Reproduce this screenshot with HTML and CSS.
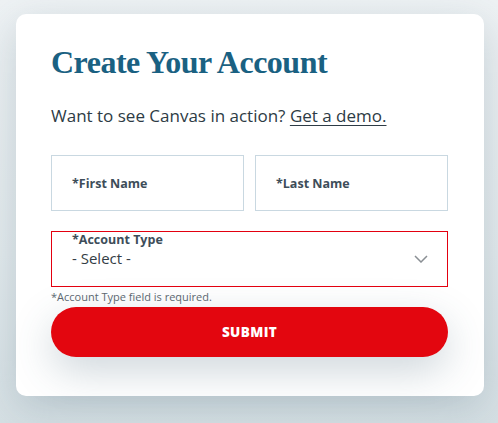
FILE: index.html
```html
<!DOCTYPE html>
<html lang="en">
<head>
<meta charset="utf-8">
<title>Create Your Account</title>
<link rel="stylesheet" href="styles.css">
</head>
<body>
<div class="card">
  <h1 class="title">Create Your Account</h1>
  <p class="intro">Want to see Canvas in action? <a href="#" class="demo">Get a demo.</a></p>
  <div class="row">
    <div class="field"><span class="label">*First Name</span></div>
    <div class="field"><span class="label">*Last Name</span></div>
  </div>
  <div class="select error">
    <span class="label small">*Account Type</span>
    <span class="value">- Select -</span>
    <svg class="chev" width="14" height="8" viewBox="0 0 14 8"><path d="M1 1 L7 7 L13 1" fill="none" stroke="#8a8f94" stroke-width="1.5"/></svg>
  </div>
  <div class="errmsg">*Account Type field is required.</div>
  <button class="submit">SUBMIT</button>
</div>
</body>
</html>
```
FILE: styles.css
```css
html, body {
  margin: 0;
  padding: 0;
}
body {
  background: linear-gradient(180deg, #eef2f4 0%, #e3eaed 60%, #d6e0e4 100%);
  height: 423px;
  overflow: hidden;
  font-family: "Open Sans", "Liberation Sans", sans-serif;
}
.card {
  margin: 14px 0 0 16px;
  width: 468px;
  height: 382px;
  box-sizing: border-box;
  padding: 28px 36px 0 35px;
  background: #fff;
  border-radius: 10px;
  box-shadow: 0 12px 40px rgba(60, 90, 110, 0.22);
}
.title {
  margin: 0;
  font-family: "Liberation Serif", "DejaVu Serif", serif;
  font-weight: 700;
  font-size: 32px;
  line-height: 40px;
  letter-spacing: -0.5px;
  color: #1a6182;
}
.intro {
  margin: 23px 0 0;
  font-size: 17px;
  line-height: 22px;
  color: #2d3b45;
}
.demo {
  color: #2d3b45;
  text-decoration: underline;
  text-underline-offset: 3px;
  text-decoration-thickness: 1px;
}
.row {
  display: flex;
  gap: 11px;
  margin-top: 28px;
}
.field {
  flex: 1;
  height: 56px;
  box-sizing: border-box;
  border: 1px solid #c9d8e1;
  display: flex;
  align-items: center;
  padding-left: 20px;
}
.label {
  font-size: 12.5px;
  font-weight: 700;
  color: #3d4d59;
}
.select {
  position: relative;
  margin-top: 20px;
  height: 56px;
  box-sizing: border-box;
  border: 1px solid #c9d8e1;
  padding: 0 0 0 20px;
  display: flex;
  flex-direction: column;
}
.select.error {
  border-color: #e3000f;
}
.label.small {
  line-height: 16px;
}
.value {
  font-size: 15px;
  line-height: 20px;
  color: #333d45;
}
.chev {
  position: absolute;
  right: 19px;
  top: 23px;
}
.errmsg {
  font-size: 11px;
  line-height: 14px;
  color: #5b6770;
  margin-top: 3px;
}
.submit {
  display: block;
  width: 100%;
  height: 50px;
  margin-top: 3px;
  border: none;
  border-radius: 25px;
  background: #e3060f;
  color: #fff;
  font-family: "Open Sans", "Liberation Sans", sans-serif;
  font-weight: 800;
  font-size: 13.5px;
  letter-spacing: 0.4px;
  box-shadow: 0 14px 40px rgba(60, 90, 110, 0.25);
}
```
